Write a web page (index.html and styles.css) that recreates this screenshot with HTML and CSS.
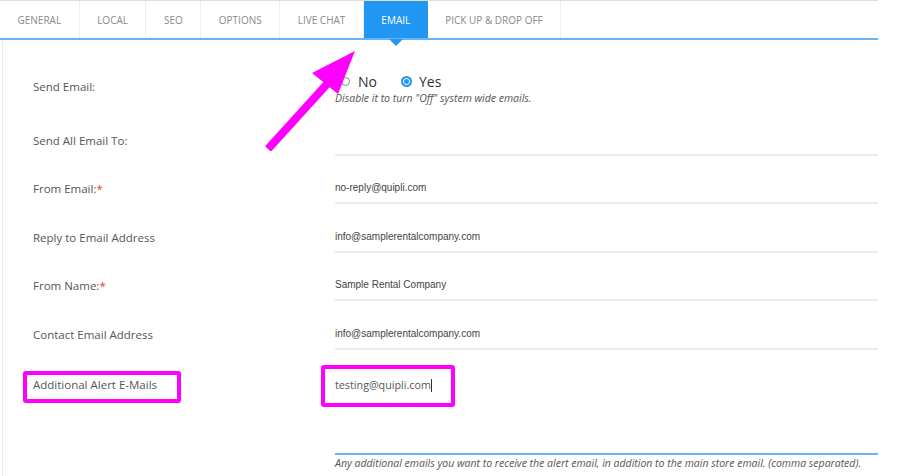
FILE: index.html
```html
<!DOCTYPE html>
<html>
    <head>
        <link rel="stylesheet" href="styles.css">
    </head>
    <body>
        <div id="panel">
            <div id="tabs">
                <span class="tab">General</span>
                <span class="tab">Local</span>
                <span class="tab">SEO</span>
                <span class="tab">Options</span>
                <span class="tab">Live Chat</span>
                <span class="tab active">Email</span>
                <span class="tab">Pick up &amp; Drop off</span>
            </div>

            <div id="form">
                <div class="row first">
                    <label class="lbl">Send Email:</label>
                    <div class="field">
                        <div class="radios">
                            <span class="radio"></span><span class="opt">No</span>
                            <span class="radio on"></span><span class="opt">Yes</span>
                        </div>
                        <p class="hint">Disable it to turn "Off" system wide emails.</p>
                    </div>
                </div>

                <div class="row">
                    <label class="lbl">Send All Email To:</label>
                    <div class="field"><div class="input"></div></div>
                </div>
                <div class="row">
                    <label class="lbl">From Email:<b class="req">*</b></label>
                    <div class="field"><div class="input">no-reply@quipli.com</div></div>
                </div>
                <div class="row">
                    <label class="lbl">Reply to Email Address</label>
                    <div class="field"><div class="input">info@samplerentalcompany.com</div></div>
                </div>
                <div class="row">
                    <label class="lbl">From Name:<b class="req">*</b></label>
                    <div class="field"><div class="input">Sample Rental Company</div></div>
                </div>
                <div class="row">
                    <label class="lbl">Contact Email Address</label>
                    <div class="field"><div class="input">info@samplerentalcompany.com</div></div>
                </div>

                <div class="row last">
                    <label class="lbl"><span class="mark">Additional Alert E-Mails</span></label>
                    <div class="field">
                        <div class="textarea"><span class="mark typed">testing@quipli.com<i class="caret"></i></span></div>
                        <p class="hint">Any additional emails you want to receive the alert email, in addition to the main store email. (comma separated).</p>
                    </div>
                </div>
            </div>

            <svg id="arrow" width="120" height="120" viewBox="0 0 120 120">
                <line x1="18" y1="118" x2="78" y2="52" stroke="#ff00ff" stroke-width="8"/>
                <polygon points="105,20 62,42 88,63" fill="#ff00ff"/>
            </svg>
        </div>
    </body>
</html>
```

FILE: styles.css
```css
body{
    margin: 0;
    background: white;
    font-family: "Open Sans", sans-serif;
}
#panel{
    position: relative;
    width: 878px;
    height: 476px;
    border-top: 1px solid #e6dccd;
}

#tabs{
    display: flex;
    height: 37px;
    border-bottom: 2px solid #6ab4f2;
}
.tab{
    display: flex;
    align-items: center;
    padding: 0 17.5px;
    font-size: 10px;
    color: #8a8a8a;
    text-transform: uppercase;
    border-right: 1px solid #f0f0f0;
}
.tab.active{
    position: relative;
    background: #2196f3;
    color: white;
    border-right: none;
}
.tab.active::after{
    content: "";
    position: absolute;
    left: 50%;
    bottom: -8px;
    margin-left: -7px;
    border-left: 7px solid transparent;
    border-right: 7px solid transparent;
    border-top: 7px solid #2196f3;
}

#form{
    margin-left: 2px;
    border-left: 1px solid #e8e8e8;
    padding-top: 31px;
    height: 406px;
}
.row{
    display: grid;
    grid-template-columns: 332px 1fr;
    height: 48.5px;
    align-items: end;
}
.lbl{
    padding-left: 30px;
    font-size: 11.5px;
    line-height: 30px;
    color: #555;
}
.req{
    color: #e53935;
    font-weight: normal;
}
.input{
    height: 29px;
    line-height: 29px;
    border-bottom: 2px solid #ebebeb;
    font-family: "Liberation Sans", Arial, sans-serif;
    font-size: 10px;
    color: #444;
}

.row.first{
    height: 36px;
    align-items: start;
}
.row.first .lbl{
    padding-top: 1px;
}
.radios{
    display: flex;
    align-items: center;
    height: 20px;
    font-size: 14px;
    color: #333;
}
.radio{
    width: 9px;
    height: 9px;
    border: 1px solid #888;
    border-radius: 50%;
    margin: 0 8px 0 6px;
    box-sizing: border-box;
}
.radio.on{
    border: 2px solid #2196f3;
    background: #2196f3;
    box-shadow: inset 0 0 0 1px white;
    margin-left: 24px;
    margin-right: 7px;
    width: 11px;
    height: 11px;
}
.hint{
    margin: 0;
    font-size: 10.5px;
    font-style: italic;
    color: #555;
    line-height: 14px;
}

.row.last{
    height: auto;
    margin-top: 20px;
    align-items: start;
}
.textarea{
    height: 83px;
    border-bottom: 2px solid #6ab4f2;
    font-size: 10.75px;
    color: #555;
    line-height: 30px;
}
.row.last .hint{
    padding-top: 1px;
}

.mark{
    position: relative;
}
.mark::after{
    content: "";
    position: absolute;
    left: -10px;
    top: -6px;
    right: -24px;
    bottom: -11px;
    border: 4px solid #ff00ff;
    border-radius: 3px;
}
.typed::after{
    left: -14px;
    right: -23px;
    top: -13px;
    bottom: -15px;
}
.caret{
    display: inline-block;
    width: 1px;
    height: 13px;
    background: #333;
    vertical-align: middle;
}

#arrow{
    position: absolute;
    left: 250px;
    top: 30px;
}
```
